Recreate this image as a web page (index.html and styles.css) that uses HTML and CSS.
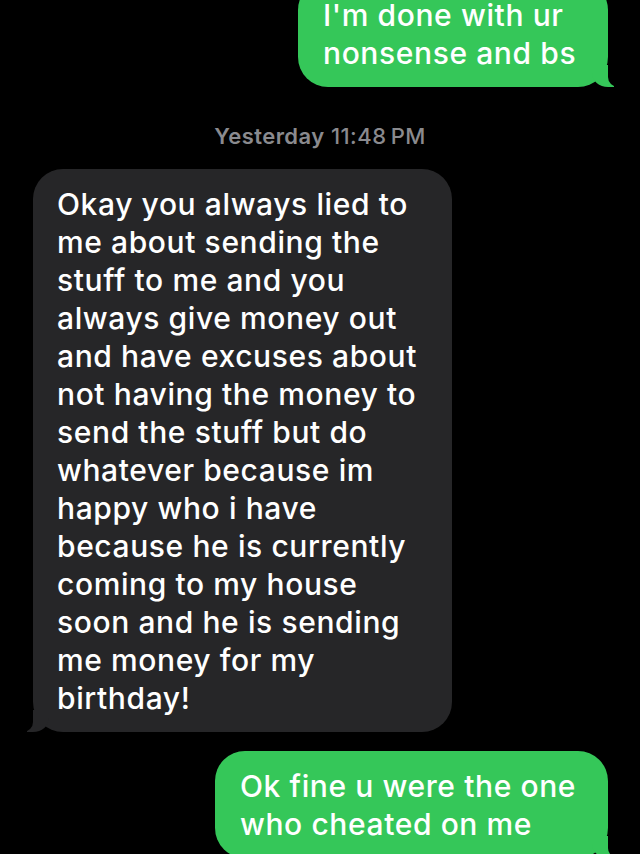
FILE: index.html
```html
<!DOCTYPE html>
<html>
<head>
<meta charset="utf-8">
<link rel="stylesheet" href="styles.css">
</head>
<body>
<div class="thread">
  <div class="bubble sent sent-top">I'm done with ur<br>nonsense and bs</div>
  <div class="stamp"><b>Yesterday</b> 11:48&#8239;PM</div>
  <div class="bubble received">Okay you always lied to<br>me about sending the<br>stuff to me and you<br>always give money out<br>and have excuses about<br>not having the money to<br>send the stuff but do<br>whatever because im<br>happy who i have<br>because he is currently<br>coming to my house<br>soon and he is sending<br>me money for my<br>birthday!</div>
  <div class="bubble sent sent-bottom">Ok fine u were the one<br>who cheated on me</div>
</div>
</body>
</html>
```

FILE: styles.css
```css
html, body {
  margin: 0;
  padding: 0;
  background: #000;
  height: 100%;
  overflow: hidden;
}
.thread {
  display: flex;
  flex-direction: column;
  font-family: Inter, "Noto Sans", sans-serif;
  color: #fff;
}
.bubble {
  position: relative;
  box-sizing: border-box;
  font-size: 30px;
  font-weight: 500;
  letter-spacing: 0.6px;
  line-height: 38px;
  padding: 16px 20px 15px 25px;
  border-radius: 30px;
  white-space: nowrap;
}
.sent {
  align-self: flex-end;
  margin-right: 32px;
  background: #35c759;
}
.sent::before {
  content: "";
  position: absolute;
  bottom: 0;
  right: -6px;
  width: 22px;
  height: 22px;
  background: #35c759;
  border-bottom-left-radius: 16px 14px;
}
.sent::after {
  content: "";
  position: absolute;
  bottom: 0;
  right: -10px;
  width: 10px;
  height: 24px;
  background: #000;
  border-bottom-left-radius: 10px;
}
.sent-top {
  margin-top: -20px;
  width: 310px;
}
.sent-bottom {
  margin-top: 19px;
  width: 393px;
}
.received {
  align-self: flex-start;
  margin-left: 33px;
  margin-top: 20px;
  width: 419px;
  padding-left: 24px;
  background: #262628;
}
.received::before {
  content: "";
  position: absolute;
  bottom: 0;
  left: -6px;
  width: 22px;
  height: 22px;
  background: #262628;
  border-bottom-right-radius: 16px 14px;
}
.received::after {
  content: "";
  position: absolute;
  bottom: 0;
  left: -10px;
  width: 10px;
  height: 24px;
  background: #000;
  border-bottom-right-radius: 10px;
}
.stamp {
  align-self: center;
  margin-top: 36px;
  font-size: 22px;
  line-height: 26px;
  letter-spacing: 0.45px;
  color: #8a8a8e;
  font-weight: 500;
}
.stamp b {
  font-weight: 600;
}
```
